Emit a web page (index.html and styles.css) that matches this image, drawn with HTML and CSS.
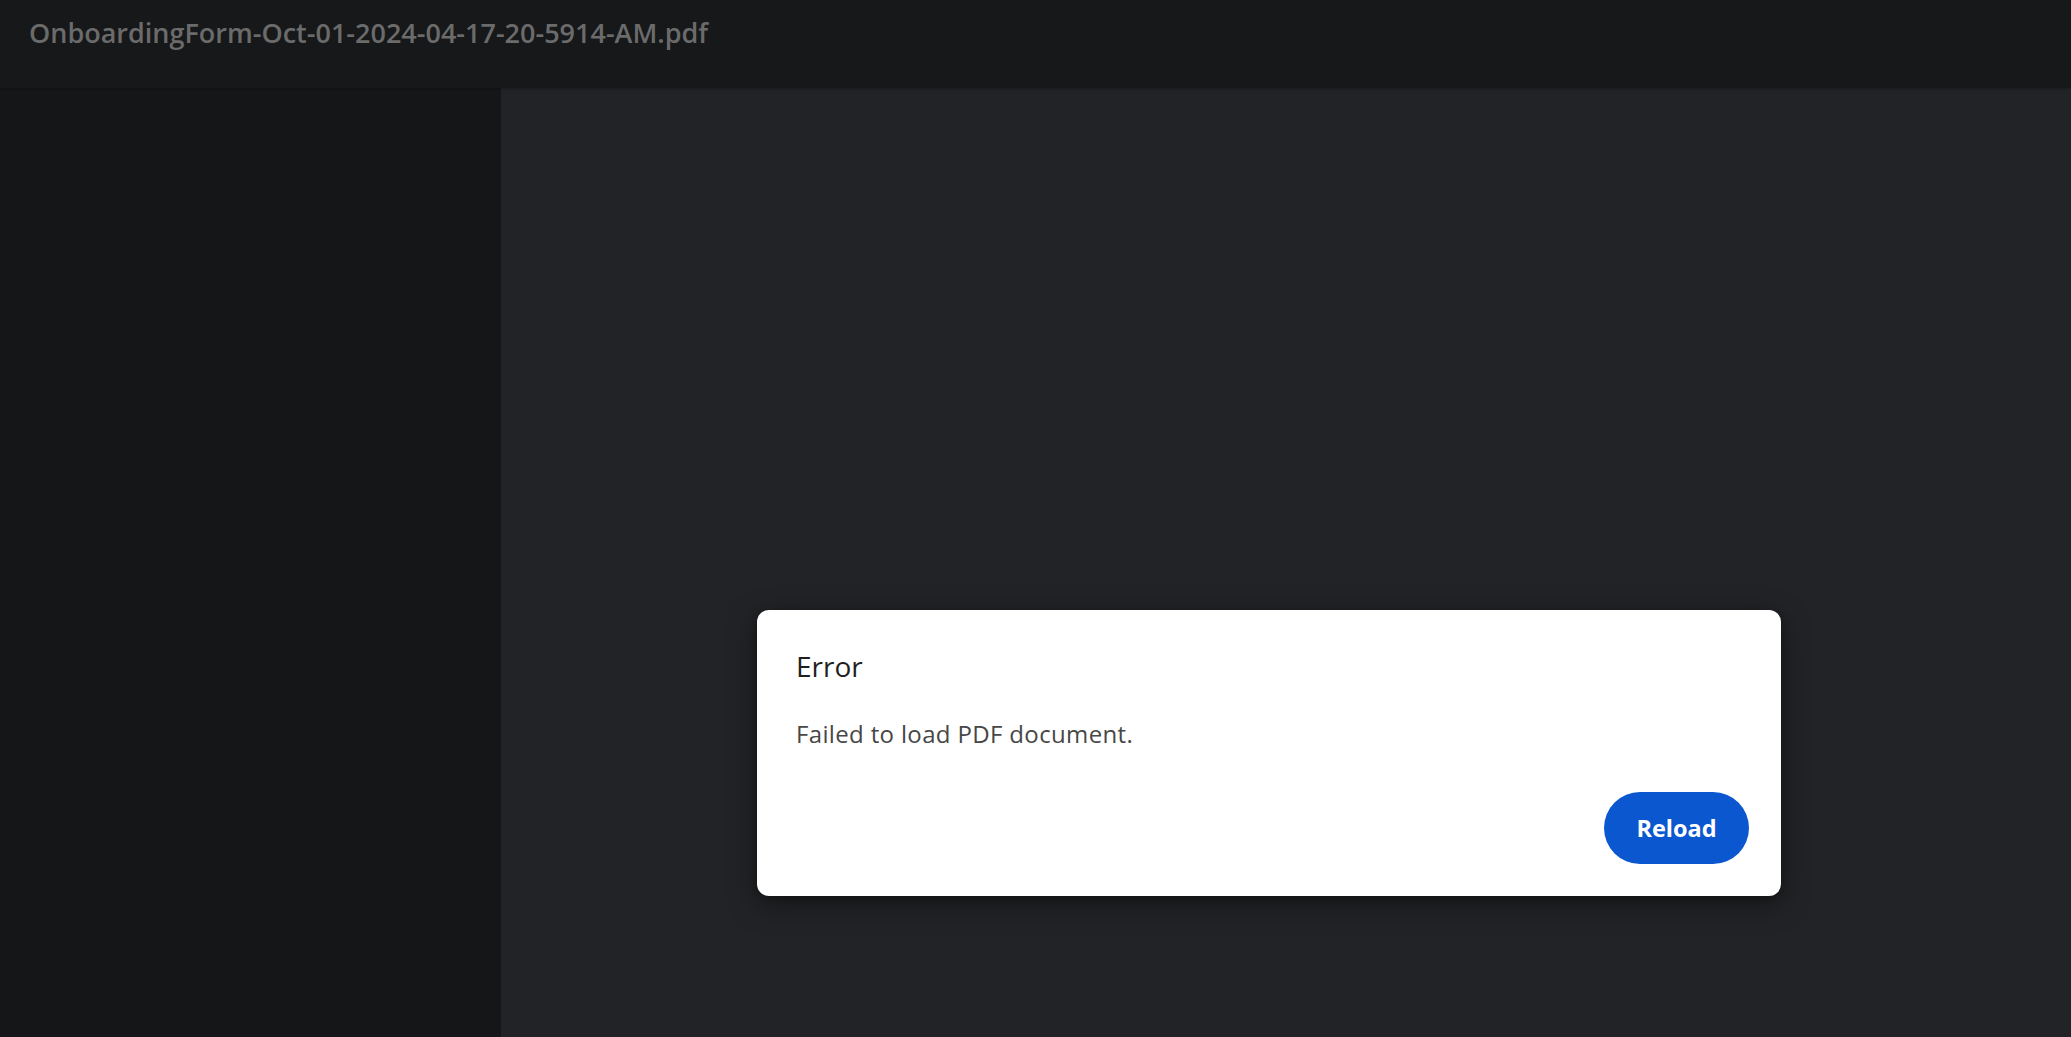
FILE: index.html
```html
<!DOCTYPE html>
<html lang="en">
<head>
<meta charset="utf-8">
<title>OnboardingForm-Oct-01-2024-04-17-20-5914-AM.pdf</title>
<link rel="stylesheet" href="styles.css">
</head>
<body>
  <header class="toolbar">
    <span class="title">OnboardingForm-Oct-01-2024-04-17-20-5914-AM.pdf</span>
  </header>
  <div class="content">
    <aside class="sidebar"></aside>
    <main class="viewer">
      <div class="dialog" role="alertdialog">
        <div class="dialog-title">Error</div>
        <div class="dialog-body">Failed to load PDF document.</div>
        <div class="dialog-actions">
          <button class="btn-reload">Reload</button>
        </div>
      </div>
    </main>
  </div>
</body>
</html>
```
FILE: styles.css
```css
* { box-sizing: border-box; }
html, body {
  margin: 0;
  height: 100%;
}
body {
  background: #222326;
  font-family: "Open Sans", "Noto Sans", sans-serif;
  display: flex;
  flex-direction: column;
  overflow: hidden;
}
.toolbar {
  height: 88px;
  flex: none;
  background: #17181a;
  padding: 13px 0 0 29px;
  box-shadow: 0 1px 2px rgba(0,0,0,0.25);
  position: relative;
  z-index: 1;
}
.title {
  color: #6b6b6b;
  font-size: 27px;
  font-weight: 600;
  line-height: 40px;
  letter-spacing: 0;
}
.content {
  flex: 1;
  display: flex;
  min-height: 0;
}
.sidebar {
  width: 501px;
  flex: none;
  background: #151618;
}
.viewer {
  flex: 1;
  background: #222326;
  padding: 522px 0 0 256px;
}
.dialog {
  width: 1024px;
  height: 286px;
  background: #ffffff;
  border-radius: 12px;
  padding: 38px 32px 32px 39px;
  box-shadow: 0 8px 30px rgba(0,0,0,0.4), 0 2px 6px rgba(0,0,0,0.25);
  display: flex;
  flex-direction: column;
}
.dialog-title {
  font-size: 28px;
  line-height: 36px;
  color: #1f1f1f;
  font-weight: 400;
}
.dialog-body {
  margin-top: 34px;
  font-size: 24px;
  line-height: 32px;
  letter-spacing: 0.35px;
  color: #474747;
}
.dialog-actions {
  margin-top: 42px;
  display: flex;
  justify-content: flex-end;
}
.btn-reload {
  width: 145px;
  height: 72px;
  border: none;
  border-radius: 36px;
  background: #0b57d0;
  color: #ffffff;
  font-family: "Open Sans", "Noto Sans", sans-serif;
  font-size: 23.5px;
  font-weight: 700;
  padding: 0;
  cursor: pointer;
}
```
